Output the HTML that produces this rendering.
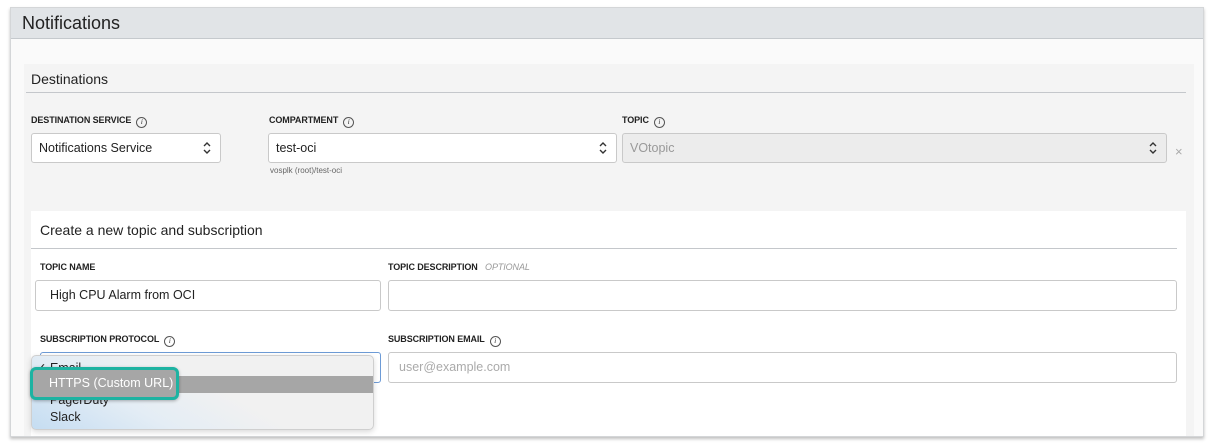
<!DOCTYPE html>
<html><head><style>
*{box-sizing:border-box;margin:0;padding:0}
body{width:1208px;height:447px;background:#fff;font-family:"Liberation Sans",sans-serif;position:relative;overflow:hidden;color:#222}
.a{position:absolute}
.lbl{position:absolute;font-size:9px;font-weight:bold;color:#222;letter-spacing:-0.1px}
.i{display:inline-block;width:11px;height:11px;border:1px solid #555;border-radius:50%;font-size:7px;font-style:italic;text-align:center;line-height:9px;font-weight:normal;margin-left:5px;vertical-align:-1px;font-family:"Liberation Serif",serif}
.in{position:absolute;background:#fff;border:1px solid #c9c9c9;border-radius:3px;font-size:12.5px;padding-left:7px;line-height:28px}
.arr{position:absolute;right:8px;top:6px;width:10px;height:16px}
</style></head><body>
<div class="a" style="left:10px;top:7px;width:1194px;height:430px;background:#fafafa;border:1px solid #d4d6d8;box-shadow:0 2px 3px rgba(0,0,0,.25)"></div>
<div class="a" style="left:11px;top:8px;width:1192px;height:31px;background:#e1e4e7;border-bottom:1px solid #c5c9cd"></div>
<div class="a" style="left:22px;top:13px;font-size:18px;color:#222">Notifications</div>
<div class="a" style="left:24px;top:64px;width:1170px;height:372px;background:#f4f4f4"></div>
<div class="a" style="left:31px;top:71px;font-size:14px">Destinations</div>
<div class="a" style="left:26px;top:92px;width:1160px;height:1px;background:#c4c7cb"></div>
<div class="lbl" style="left:31px;top:115px">DESTINATION SERVICE<span class="i">i</span></div>
<div class="lbl" style="left:269px;top:115px">COMPARTMENT<span class="i">i</span></div>
<div class="lbl" style="left:622px;top:115px">TOPIC<span class="i">i</span></div>
<div class="in" style="left:31px;top:133px;width:190px;height:30px">Notifications Service<svg class="arr" viewBox="0 0 10 16"><path d="M2 6l3-3 3 3M2 10l3 3 3-3" fill="none" stroke="#333" stroke-width="1.4"/></svg></div>
<div class="in" style="left:268px;top:133px;width:349px;height:30px">test-oci<svg class="arr" viewBox="0 0 10 16"><path d="M2 6l3-3 3 3M2 10l3 3 3-3" fill="none" stroke="#333" stroke-width="1.4"/></svg></div>
<div class="in" style="left:622px;top:133px;width:545px;height:30px;background:#ececec;color:#999">VOtopic<svg class="arr" viewBox="0 0 10 16"><path d="M2 6l3-3 3 3M2 10l3 3 3-3" fill="none" stroke="#333" stroke-width="1.4"/></svg></div>
<div class="a" style="left:1175px;top:144px;font-size:13px;color:#aaa">×</div>
<div class="a" style="left:270px;top:166px;font-size:8px;color:#666">vosplk (root)/test-oci</div>
<div class="a" style="left:31px;top:211px;width:1155px;height:225px;background:#fff"></div>
<div class="a" style="left:40px;top:222px;font-size:14px">Create a new topic and subscription</div>
<div class="a" style="left:31px;top:248px;width:1146px;height:1px;background:#c4c7cb"></div>
<div class="lbl" style="left:40px;top:262px">TOPIC NAME</div>
<div class="lbl" style="left:388px;top:262px">TOPIC DESCRIPTION <span style="font-weight:normal;font-style:italic;color:#999;margin-left:5px">OPTIONAL</span></div>
<div class="in" style="left:35px;top:280px;width:346px;height:31px;line-height:29px;padding-left:14px">High CPU Alarm from OCI</div>
<div class="in" style="left:388px;top:280px;width:789px;height:31px"></div>
<div class="lbl" style="left:40px;top:334px">SUBSCRIPTION PROTOCOL<span class="i">i</span></div>
<div class="lbl" style="left:388px;top:334px">SUBSCRIPTION EMAIL<span class="i">i</span></div>
<div class="in" style="left:40px;top:352px;width:341px;height:31px;border-color:#6d9bd6"></div>
<div class="in" style="left:388px;top:352px;width:789px;height:31px;color:#aaa;padding-left:10px;line-height:29px">user@example.com</div>
<div class="a" style="left:31px;top:355px;width:343px;height:75px;border:1px solid #cfcfcf;border-radius:5px;background:linear-gradient(30deg,#c5ddf2 0%,#e4edf5 30%,#f1f1f1 55%);box-shadow:0 2px 6px rgba(0,0,0,.15);overflow:hidden">
<div class="a" style="left:4px;top:4px;font-size:12.5px;color:#222">✓ Email</div>
<div class="a" style="left:0;top:20px;width:343px;height:17px;background:#a6a6a6"></div>
<div class="a" style="left:18px;top:37px;font-size:12.5px;color:#222">PagerDuty</div>
<div class="a" style="left:18px;top:54px;font-size:12.5px;color:#222">Slack</div>
</div>
<div class="a" style="left:30px;top:367px;width:149px;height:33px;border:3px solid #1db3a2;border-radius:6px;background:#a6a6a6;box-shadow:0 1px 3px rgba(0,0,0,.3)"></div>
<div class="a" style="left:49px;top:376px;font-size:12.5px;color:#fff">HTTPS (Custom URL)</div>
</body></html>
